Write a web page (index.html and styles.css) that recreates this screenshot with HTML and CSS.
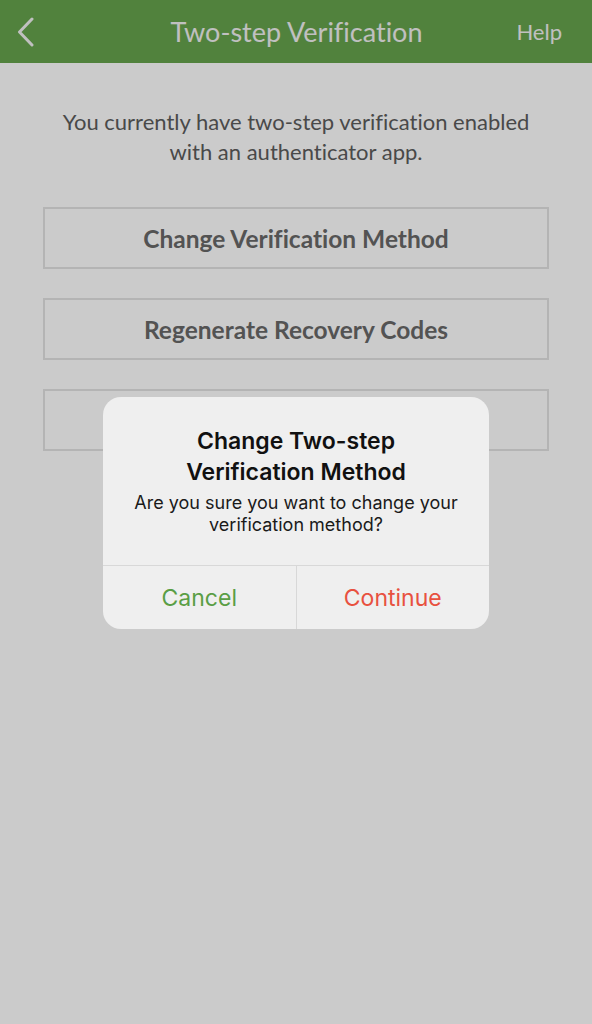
FILE: index.html
```html
<!DOCTYPE html>
<html lang="en">
<head>
    <meta charset="UTF-8">
    <meta name="viewport" content="width=device-width, initial-scale=1.0">
    <title>Two-step Verification</title>
    <link rel="stylesheet" href="styles.css">
</head>
<body>
    <!-- Navbar -->
    <nav class="navbar">
        <a class="back" href="#">
            <svg width="18" height="30" viewBox="0 0 18 30">
                <path d="M15 2 L2.5 15 L15 28" fill="none" stroke="currentColor" stroke-width="3" stroke-linecap="round" stroke-linejoin="round"/>
            </svg>
        </a>
        <div class="title">Two-step Verification</div>
        <a class="help" href="#">Help</a>
    </nav>

    <!-- Main Content -->
    <div class="container">
        <p class="intro">You currently have two-step verification enabled with an authenticator app.</p>
        <div class="actions">
            <button class="btn">Change Verification Method</button>
            <button class="btn">Regenerate Recovery Codes</button>
            <button class="btn"></button>
        </div>
    </div>

    <!-- Confirm Dialog -->
    <div class="overlay">
        <div class="dialog">
            <div class="dialog-body">
                <h3>Change Two-step Verification Method</h3>
                <p>Are you sure you want to change your verification method?</p>
            </div>
            <div class="dialog-buttons">
                <button class="cancel">Cancel</button>
                <button class="continue">Continue</button>
            </div>
        </div>
    </div>
</body>
</html>
```

FILE: styles.css
```css
/* Reset & Global Styling */
* {
    margin: 0;
    padding: 0;
    box-sizing: border-box;
}
html, body {
    height: 100%;
}
body {
    font-family: Lato, "Noto Sans", sans-serif;
    font-variant-ligatures: none;
    background-color: #fff;
    color: #333;
    position: relative;
}
a {
    text-decoration: none;
    color: inherit;
}
button {
    font-family: inherit;
    font-variant-ligatures: none;
    cursor: pointer;
}

/* Navbar */
.navbar {
    height: 63px;
    background-color: #66a34d;
    color: #f0f0f0;
    display: flex;
    align-items: center;
    justify-content: space-between;
    padding: 0 30px 0 17px;
}
.navbar .back {
    display: flex;
    width: 60px;
    padding-top: 1px;
}
.navbar .title {
    font-size: 27px;
    padding-bottom: 1px;
}
.navbar .help {
    font-size: 22px;
    width: 46px;
    text-align: right;
}

/* Main Content */
.container {
    padding: 44px 43px 0;
    background-color: #fefefe;
    min-height: calc(100% - 63px);
}
.intro {
    font-size: 22px;
    line-height: 30px;
    text-align: center;
    color: #5c5c5c;
    margin-bottom: 40px;
}
.actions {
    display: flex;
    flex-direction: column;
    gap: 29px;
}
.btn {
    height: 62px;
    background: transparent;
    border: 2px solid #e2e2e2;
    font-size: 24.5px;
    font-weight: 700;
    color: #686868;
}

/* Dim layer + dialog */
.overlay {
    position: absolute;
    inset: 0;
    background-color: rgba(0, 0, 0, 0.2);
}
.dialog {
    position: absolute;
    top: 397px;
    left: 103px;
    width: 386px;
    background-color: #efefef;
    border-radius: 18px;
    overflow: hidden;
    font-family: Inter, Roboto, sans-serif;
    text-align: center;
}
.dialog-body {
    padding: 29px 20px 29px;
}
.dialog h3 {
    font-size: 23px;
    line-height: 31px;
    font-weight: 600;
    color: #111;
    padding: 0 50px;
}
.dialog p {
    font-size: 18px;
    line-height: 22px;
    color: #1a1a1a;
    margin-top: 4px;
}
.dialog-buttons {
    display: flex;
    border-top: 1px solid #d8d8d8;
}
.dialog-buttons button {
    flex: 1;
    height: 63px;
    border: none;
    background: transparent;
    font-family: Inter, Roboto, sans-serif;
    font-size: 23px;
}
.dialog-buttons .cancel {
    color: #5a9e45;
    border-right: 1px solid #d8d8d8;
}
.dialog-buttons .continue {
    color: #e8513f;
}
```
